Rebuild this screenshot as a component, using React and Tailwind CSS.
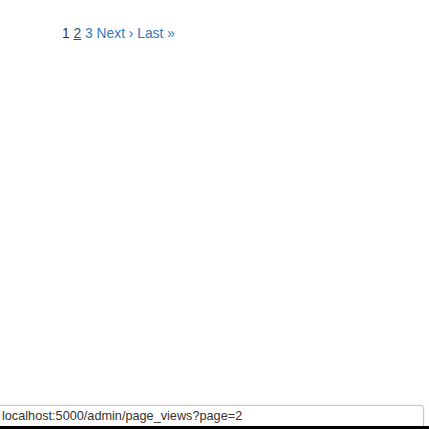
export default function App() {
  return (
    <div className="relative h-[429px] w-[429px] overflow-hidden bg-white font-['Liberation_Sans',Arial,sans-serif]">
      <div className="pl-[62px] pt-[24px] text-[13.8px] leading-[19px] text-[#337ab7]">
        <span className="text-[#333333]">1</span>{' '}
        <a href="#" className="text-[#23527c] underline">2</a>{' '}
        <a href="#">3</a>{' '}
        <a href="#">Next ›</a>{' '}
        <a href="#">Last »</a>
      </div>

      <div className="absolute bottom-0 left-0 right-0">
        <div className="w-[424px] h-[21px] rounded-tr-[4px] border-t border-r border-[#c8c8c8] bg-white pl-[2px] text-[12.7px] leading-[20px] text-[#333333] shadow-[0_0_2px_rgba(0,0,0,0.15)]">
          localhost:5000/admin/page_views?page=2
        </div>
        <div className="h-[3px] bg-black" />
      </div>
    </div>
  );
}
